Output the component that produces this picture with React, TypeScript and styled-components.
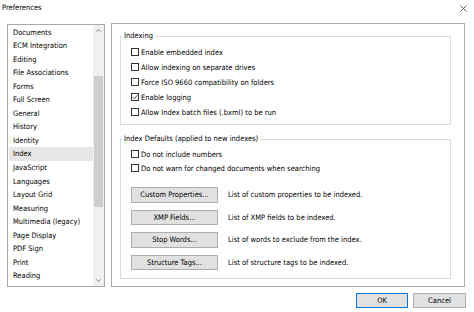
import React from "react";
import styled, { createGlobalStyle } from "styled-components";

const GlobalStyle = createGlobalStyle`
  html, body {
    margin: 0;
    padding: 0;
    background: #ffffff;
  }
  body {
    font-family: "DejaVu Sans Condensed", "DejaVu Sans", sans-serif;
    font-size: 7.5px;
    color: #000000;
  }
  * { box-sizing: border-box; }
`;

const Window = styled.div`
  width: 474px;
  height: 312px;
  display: flex;
  flex-direction: column;
  background: #ffffff;
`;

const TitleBar = styled.div`
  height: 16px;
  display: flex;
  align-items: center;
  justify-content: space-between;
  padding: 0 7px 0 2px;
`;

const Title = styled.span`
  font-size: 7.5px;
  line-height: 16px;
`;

const CloseIcon = styled.svg`
  width: 7px;
  height: 7px;
  display: block;
`;

const Body = styled.div`
  display: flex;
  gap: 6px;
  padding: 7px 9px 0 7px;
  height: 271px;
`;

const ListBox = styled.div`
  margin-top: 1px;
  width: 98px;
  height: 263px;
  border: 1px solid #a9a9a9;
  display: flex;
  background: #ffffff;
`;

const Items = styled.div`
  flex: 1;
  padding: 0.5px 0 0 1px;
  display: flex;
  flex-direction: column;
`;

const Item = styled.div<{ $selected?: boolean }>`
  height: 13.55px;
  line-height: 13.55px;
  padding-left: 4px;
  white-space: nowrap;
  background: ${(p) => (p.$selected ? "#e6e6e6" : "transparent")};
`;

const ScrollBar = styled.div`
  width: 11px;
  display: flex;
  flex-direction: column;
  background: #f0f0f0;
`;

const ScrollArrow = styled.div`
  height: 11px;
  display: flex;
  align-items: center;
  justify-content: center;
`;

const ScrollTrack = styled.div`
  flex: 1;
  padding: 0 1px;
`;

const Thumb = styled.div`
  height: 131px;
  background: #cdcdcd;
`;

const Panel = styled.div`
  width: 354px;
  height: 264px;
  border: 1px solid #adadad;
  padding: 7px 13px 0 8px;
  display: flex;
  flex-direction: column;
`;

const Group = styled.fieldset<{ $gap?: number }>`
  margin: ${(p) => p.$gap ?? 0}px 0 0 0;
  padding: 0;
  min-width: 0;
  border: 1px solid #dcdcdc;
`;

const Legend = styled.legend`
  margin-left: 1px;
  padding: 0 2px;
  font-size: 7.5px;
  line-height: 10px;
`;

const GroupBody = styled.div<{ $top: number; $bottom: number }>`
  padding: ${(p) => p.$top}px 0 ${(p) => p.$bottom}px 10px;
  display: flex;
  flex-direction: column;
`;

const CheckRow = styled.label<{ $h: number }>`
  height: ${(p) => p.$h}px;
  display: flex;
  align-items: center;
  white-space: nowrap;
`;

const Box = styled.span`
  width: 8px;
  height: 8px;
  border: 1px solid #333333;
  background: #ffffff;
  margin-right: 2px;
  display: flex;
  align-items: center;
  justify-content: center;
  flex: none;
`;

const ButtonList = styled.div`
  margin-top: 12px;
  display: flex;
  flex-direction: column;
  gap: 7px;
`;

const ButtonRow = styled.div`
  display: flex;
  align-items: center;
  gap: 10px;
`;

const Button = styled.button<{ $w: number; $h: number; $default?: boolean }>`
  width: ${(p) => p.$w}px;
  height: ${(p) => p.$h}px;
  padding: 0;
  margin: 0;
  font-family: inherit;
  font-size: 7.5px;
  color: #000000;
  background: #e1e1e1;
  border: 1px solid ${(p) => (p.$default ? "#0078d7" : "#adadad")};
  border-radius: 0;
  flex: none;
`;

const Description = styled.span`
  white-space: nowrap;
`;

const Footer = styled.div`
  display: flex;
  justify-content: flex-end;
  gap: 5px;
  padding: 6px 8px 0 0;
`;

const categories = [
  "Documents",
  "ECM Integration",
  "Editing",
  "File Associations",
  "Forms",
  "Full Screen",
  "General",
  "History",
  "Identity",
  "Index",
  "JavaScript",
  "Languages",
  "Layout Grid",
  "Measuring",
  "Multimedia (legacy)",
  "Page Display",
  "PDF Sign",
  "Print",
  "Reading",
];

const indexing = [
  { label: "Enable embedded index", checked: false },
  { label: "Allow indexing on separate drives", checked: false },
  { label: "Force ISO 9660 compatibility on folders", checked: false },
  { label: "Enable logging", checked: true },
  { label: "Allow Index batch files (.bxml) to be run", checked: false },
];

const defaults = [
  "Do not include numbers",
  "Do not warn for changed documents when searching",
];

const actions = [
  { button: "Custom Properties...", text: "List of custom properties to be indexed." },
  { button: "XMP Fields...", text: "List of XMP fields to be indexed." },
  { button: "Stop Words...", text: "List of words to exclude from the index." },
  { button: "Structure Tags...", text: "List of structure tags to be indexed." },
];

const Check = ({ checked }: { checked?: boolean }) => (
  <Box>
    {checked && (
      <svg width="6" height="6" viewBox="0 0 6 6">
        <path d="M0.6 3.1 L2.3 4.8 L5.4 1.2" fill="none" stroke="#333" strokeWidth="0.9" />
      </svg>
    )}
  </Box>
);

const Chevron = ({ up }: { up?: boolean }) => (
  <svg width="5" height="3" viewBox="0 0 5 3">
    <path
      d={up ? "M0.5 2.6 L2.5 0.6 L4.5 2.6" : "M0.5 0.4 L2.5 2.4 L4.5 0.4"}
      fill="none"
      stroke="#606060"
      strokeWidth="0.8"
    />
  </svg>
);

export default function App() {
  return (
    <Window>
      <GlobalStyle />
      <TitleBar>
        <Title>Preferences</Title>
        <CloseIcon viewBox="0 0 7 7">
          <path d="M0.5 0.5 L6.5 6.5 M6.5 0.5 L0.5 6.5" stroke="#333" strokeWidth="0.8" />
        </CloseIcon>
      </TitleBar>
      <Body>
        <ListBox>
          <Items>
            {categories.map((c) => (
              <Item key={c} $selected={c === "Index"}>
                {c}
              </Item>
            ))}
          </Items>
          <ScrollBar>
            <ScrollArrow>
              <Chevron up />
            </ScrollArrow>
            <ScrollTrack>
              <Thumb style={{ marginTop: 40 }} />
            </ScrollTrack>
            <ScrollArrow>
              <Chevron />
            </ScrollArrow>
          </ScrollBar>
        </ListBox>
        <Panel>
          <Group>
            <Legend>Indexing</Legend>
            <GroupBody $top={3.5} $bottom={4}>
              {indexing.map((o) => (
                <CheckRow key={o.label} $h={15}>
                  <Check checked={o.checked} />
                  {o.label}
                </CheckRow>
              ))}
            </GroupBody>
          </Group>
          <Group $gap={9.5}>
            <Legend>Index Defaults (applied to new indexes)</Legend>
            <GroupBody $top={3} $bottom={8}>
              {defaults.map((d) => (
                <CheckRow key={d} $h={14}>
                  <Check />
                  {d}
                </CheckRow>
              ))}
              <ButtonList>
                {actions.map((a) => (
                  <ButtonRow key={a.button}>
                    <Button $w={87} $h={15.5}>
                      {a.button}
                    </Button>
                    <Description>{a.text}</Description>
                  </ButtonRow>
                ))}
              </ButtonList>
            </GroupBody>
          </Group>
        </Panel>
      </Body>
      <Footer>
        <Button $w={52} $h={15} $default>
          OK
        </Button>
        <Button $w={53} $h={15}>
          Cancel
        </Button>
      </Footer>
    </Window>
  );
}
